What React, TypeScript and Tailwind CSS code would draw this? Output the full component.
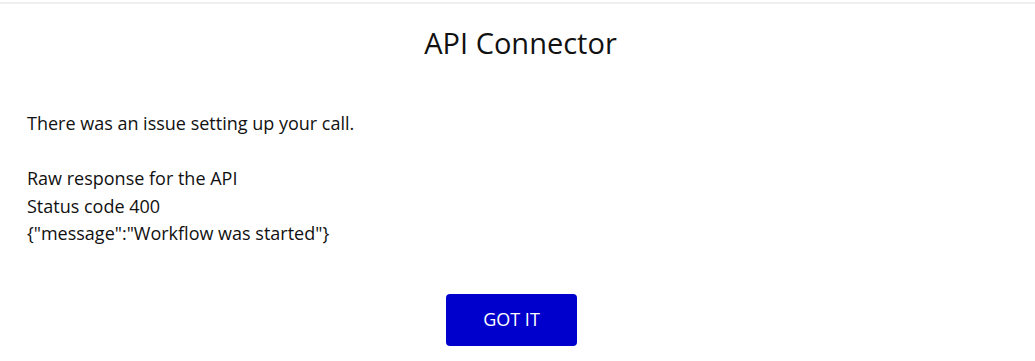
const App = () => {
  return (
    <div className="w-full h-[361px] bg-white font-['Open_Sans',sans-serif] text-[#111111]">
      <div className="h-[2px] bg-white" />
      <div className="border-t-2 border-[#efefef]">
        <h1 className="text-center text-[29px] leading-[40px] pt-[19px] pl-[6px] font-normal">
          API Connector
        </h1>

        <div className="px-[27px] pt-[47px] text-[18px] leading-[27.5px]">
          <p>There was an issue setting up your call.</p>
          <p>&nbsp;</p>
          <p>Raw response for the API</p>
          <p>Status code 400</p>
          <p>{'{"message":"Workflow was started"}'}</p>
        </div>

        <div className="flex justify-center pt-[46px] pr-[12px]">
          <button className="w-[131px] h-[52px] rounded-[4px] bg-[#0000cc] text-white text-[18px]">
            GOT IT
          </button>
        </div>
      </div>
    </div>
  );
};

export default App;
